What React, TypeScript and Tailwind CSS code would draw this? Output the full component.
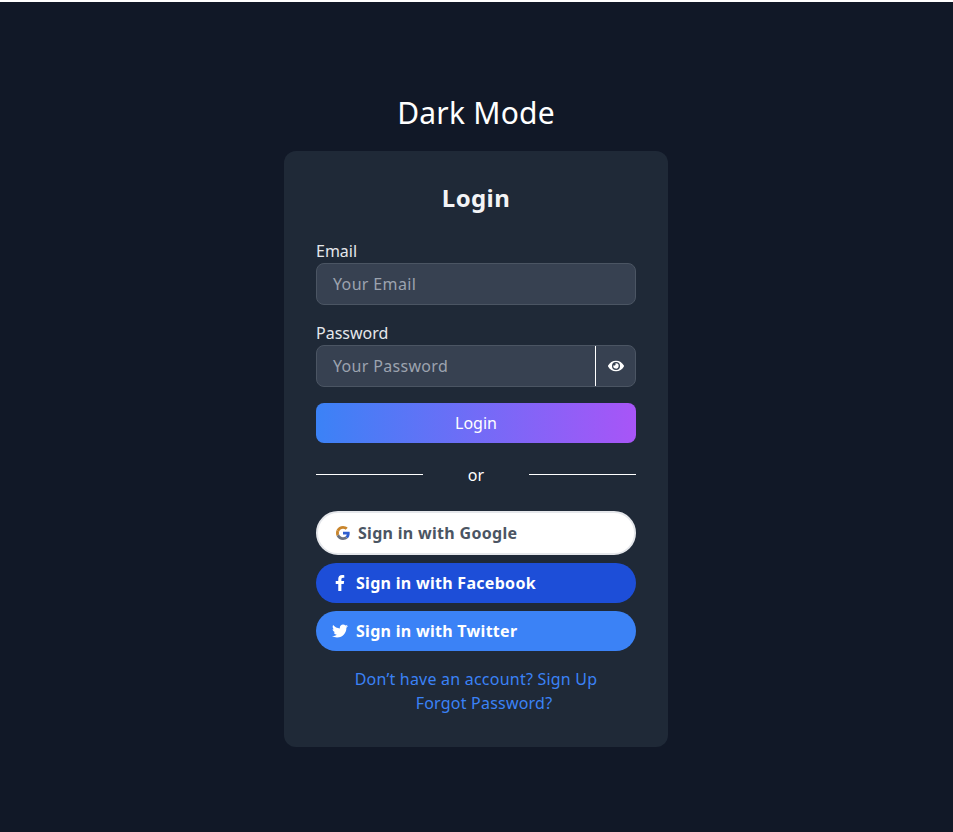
import { FaEye, FaFacebookF, FaTwitter } from 'react-icons/fa';

function GoogleIcon() {
  return (
    <svg viewBox="0 0 48 48" className="w-[14px] h-[14px]">
      <path fill="#C9852B" d="M24 9.500c3.500 0 6.700 1.200 9.200 3.600l6.900-6.900C35.900 2.400 30.400 0 24 0 14.600 0 6.500 5.400 2.600 13.200l8 6.200C12.500 13.600 17.800 9.500 24 9.500z" />
      <path fill="#2F5FD0" d="M46.900 24.500c0-1.600-.1-3.100-.4-4.500H24v9h12.900c-.6 3-2.200 5.500-4.700 7.200l7.700 6c4.500-4.200 7-10.300 7-17.700z" />
      <path fill="#C9852B" d="M10.600 28.600c-.5-1.400-.8-3-.8-4.600s.3-3.200.8-4.600l-8-6.200C.9 16.500 0 20.100 0 24s.9 7.500 2.600 10.800l8-6.200z" />
      <path fill="#6B7280" d="M24 48c6.500 0 11.900-2.100 15.900-5.800l-7.700-6c-2.200 1.400-4.900 2.300-8.200 2.300-6.200 0-11.500-4.100-13.400-9.900l-8 6.200C6.500 42.600 14.600 48 24 48z" />
    </svg>
  );
}

export default function App() {
  return (
    <div className="min-h-[832px] bg-[#111827] border-t-2 border-white pr-px font-['Noto_Sans',sans-serif] flex flex-col items-center text-white">
      <h1 className="mt-[93px] text-[30px] leading-[36px] tracking-[0.22px] mb-[20px]">Dark Mode</h1>

      <div className="w-[384px] h-[596px] bg-[#1f2937] rounded-xl px-8 pt-8">
        <h2 className="-mt-px text-center text-[24px] leading-[32px] tracking-[0.4px] font-bold text-[#f3f4f6] mb-[25px]">Login</h2>

        <label className="block text-[16px] leading-[24px] text-[#e5e7eb]">Email</label>
        <div className="h-[42px] rounded-lg bg-[#374151] border border-[#4b5563] px-4 flex items-center text-[16px] tracking-[0.35px] text-[#9ca3af] mb-4">
          Your Email
        </div>

        <label className="block text-[16px] leading-[24px] text-[#e5e7eb]">Password</label>
        <div className="h-[42px] rounded-lg bg-[#374151] border border-[#4b5563] flex items-center text-[16px] text-[#9ca3af] mb-4">
          <span className="flex-1 px-4 tracking-[0.32px]">Your Password</span>
          <span className="w-10 h-full border-l border-white flex items-center justify-center text-white">
            <FaEye className="w-4 h-4" />
          </span>
        </div>

        <div className="h-10 rounded-lg bg-[linear-gradient(to_right,#3b82f6,#a855f7)] flex items-center justify-center text-[16px]">
          Login
        </div>

        <div className="flex items-center h-6 mt-5 mb-6">
          <div className="flex-1 h-px bg-white -translate-y-px" />
          <span className="w-[106px] text-center text-[16px]">or</span>
          <div className="flex-1 h-px bg-white -translate-y-px" />
        </div>

        <div className="h-11 rounded-full bg-white border-2 border-[#e5e7eb] px-[18px] flex items-center gap-2 text-[16px] font-bold tracking-[0.3px] text-[#4b5563]">
          <GoogleIcon />
          Sign in with Google
        </div>
        <div className="h-10 rounded-full bg-[#1d4ed8] mt-2 px-4 flex items-center gap-2 text-[16px] tracking-[0.29px] font-bold">
          <FaFacebookF className="w-4 h-4" />
          Sign in with Facebook
        </div>
        <div className="h-10 rounded-full bg-[#3b82f6] mt-2 px-4 flex items-center gap-2 text-[16px] tracking-[0.29px] font-bold">
          <FaTwitter className="w-4 h-4" />
          Sign in with Twitter
        </div>

        <div className="mt-4 text-center text-[16px] leading-6 tracking-[0.22px] text-[#3b82f6]">
          <p>Don’t have an account? Sign Up</p>
          <p className="pl-4">Forgot Password?</p>
        </div>
      </div>
    </div>
  );
}
